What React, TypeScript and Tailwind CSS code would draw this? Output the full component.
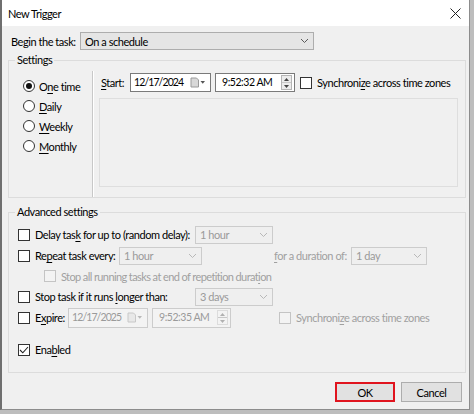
import React from "react";

const FONT = { fontFamily: 'Lato, "Noto Sans", "Liberation Sans", sans-serif' };

function Chevron({ disabled }: { disabled?: boolean }) {
  return (
    <svg width="9" height="6" viewBox="0 0 9 6" className="shrink-0">
      <path d="M1 1 L4.5 4.5 L8 1" fill="none" stroke={disabled ? "#b8b8b8" : "#5a5a5a"} strokeWidth="1" />
    </svg>
  );
}

function Combo({ w, text, disabled, h = 18 }: { w: number; text: string; disabled?: boolean; h?: number }) {
  return (
    <div
      className={
        "flex items-center justify-between pl-[4px] pr-[4px] border shrink-0 " +
        (disabled ? "border-[#cccccc] bg-[#efefef] text-[#9a9a9a]" : "border-[#adadad] bg-[#e5e5e5] text-black")
      }
      style={{ width: w, height: h }}
    >
      <span className="leading-none whitespace-nowrap">{text}</span>
      <Chevron disabled={disabled} />
    </div>
  );
}

function CalIcon({ disabled }: { disabled?: boolean }) {
  const c = disabled ? "#c8c8c8" : "#9a9a9a";
  return (
    <svg width="16" height="11" viewBox="0 0 16 11" className="shrink-0">
      <path d="M1 1 H6.5 L8.5 3 V10 H1 Z" fill={disabled ? "#e8e8e8" : "#d8d8d8"} stroke={c} strokeWidth="1" />
      <path d="M10.5 4 H15 L12.75 6.8 Z" fill={disabled ? "#b8b8b8" : "#555"} />
    </svg>
  );
}

function DateBox({ w, text, disabled, h }: { w: number; text: string; disabled?: boolean; h: number }) {
  return (
    <div
      className={
        "flex items-center justify-between pl-[3px] pr-[4px] border shrink-0 " +
        (disabled ? "border-[#cccccc] bg-[#f3f3f3] text-[#9a9a9a]" : "border-[#7a7a7a] bg-white text-black")
      }
      style={{ width: w, height: h }}
    >
      <span className="leading-none whitespace-nowrap text-[10.5px] tracking-[-0.9px]">{text}</span>
      <CalIcon disabled={disabled} />
    </div>
  );
}

function Spin({ disabled }: { disabled?: boolean }) {
  const c = disabled ? "#b0b0b0" : "#444";
  return (
    <div className={"flex flex-col w-[11px] h-[15px] border shrink-0 " + (disabled ? "border-[#dcdcdc]" : "border-[#b5b5b5] bg-[#ececec]")}>
      <div className="flex-1 flex items-center justify-center border-b border-[#c8c8c8]">
        <svg width="5" height="3" viewBox="0 0 5 3"><path d="M0 3 L2.5 0 L5 3 Z" fill={c} /></svg>
      </div>
      <div className="flex-1 flex items-center justify-center">
        <svg width="5" height="3" viewBox="0 0 5 3"><path d="M0 0 L2.5 3 L5 0 Z" fill={c} /></svg>
      </div>
    </div>
  );
}

function TimeBox({ w, text, disabled, h }: { w: number; text: string; disabled?: boolean; h: number }) {
  return (
    <div
      className={
        "flex items-center justify-between pl-[6px] pr-[2px] border shrink-0 " +
        (disabled ? "border-[#cccccc] bg-[#f3f3f3] text-[#9a9a9a]" : "border-[#7a7a7a] bg-white text-black")
      }
      style={{ width: w, height: h }}
    >
      <span className="leading-none whitespace-nowrap text-[10.5px] tracking-[-0.45px]">{text}</span>
      <Spin disabled={disabled} />
    </div>
  );
}

function Check({ checked, disabled }: { checked?: boolean; disabled?: boolean }) {
  return (
    <div
      className={
        "w-[12px] h-[12px] border shrink-0 flex items-center justify-center " +
        (disabled ? "border-[#c4c4c4] bg-[#f3f3f3]" : "border-[#333333] bg-white")
      }
    >
      {checked && (
        <svg width="10" height="8" viewBox="0 0 10 8">
          <path d="M1 4 L3.8 6.8 L9 1" fill="none" stroke="#222" strokeWidth="1.1" />
        </svg>
      )}
    </div>
  );
}

function Radio({ checked }: { checked?: boolean }) {
  return (
    <div className="w-[12px] h-[12px] rounded-full border border-[#333333] bg-white flex items-center justify-center shrink-0">
      {checked && <div className="w-[6px] h-[6px] rounded-full bg-[#111]" />}
    </div>
  );
}

export default function App() {
  return (
    <div className="w-[474px] h-[414px] bg-[#bdbdbd] text-[11px] tracking-[-0.45px] text-black whitespace-nowrap" style={FONT}>
      <div className="w-[470px] h-[410px] bg-[#f0f0f0] border-l-2 border-l-[#6f6f6f] border-r border-r-[#8c8c8c] border-b border-b-[#8c8c8c] flex flex-col">
        {/* Title bar */}
        <div className="h-[26px] bg-white flex items-center justify-between pl-[6px] pr-[8px] shrink-0">
          <span className="leading-none">New Trigger</span>
          <svg width="11" height="11" viewBox="0 0 11 11">
            <path d="M0.5 0.5 L10.5 10.5 M10.5 0.5 L0.5 10.5" stroke="#222" strokeWidth="1" />
          </svg>
        </div>

        {/* Begin the task */}
        <div className="flex items-center mt-[6px] h-[18px] pl-[9px]">
          <span className="w-[69px] shrink-0 leading-none">Begin the task:</span>
          <Combo w={234} text="On a schedule" />
        </div>

        {/* Settings */}
        <fieldset className="mt-[2px] ml-[6px] w-[458px] border border-[#dcdcdc] p-0 m-0">
          <legend className="ml-[6px] px-[2px] leading-[16px]">Settings</legend>
          <div className="flex h-[129px]">
            <div className="w-[83px] shrink-0 pt-[8px] pl-[14px] flex flex-col">
              {[
                { pre: "O", u: "n", post: "e time", checked: true },
                { pre: "", u: "D", post: "aily" },
                { pre: "", u: "W", post: "eekly" },
                { pre: "", u: "M", post: "onthly" },
              ].map((r, i) => (
                <div key={i} className="h-[20px] flex items-center gap-[4px]">
                  <Radio checked={r.checked} />
                  <span className="leading-none">
                    {r.pre}
                    <u className="underline-offset-2">{r.u}</u>
                    {r.post}
                  </span>
                </div>
              ))}
            </div>
            <div className="mt-[3px] w-[2px] shrink-0 border-l border-l-[#c8c8c8] border-r border-r-white" />
            <div className="flex-1 flex flex-col pl-[5px] pr-[7px]">
              <div className="mt-[5px] h-[19px] flex items-center">
                <span className="ml-[2px] w-[29px] shrink-0 leading-none">
                  <u className="underline-offset-2">S</u>tart:
                </span>
                <DateBox w={81} h={19} text="12/17/2024" />
                <div className="ml-[4px] shrink-0">
                  <TimeBox w={80} h={19} text="9:52:32 AM" />
                </div>
                <div className="ml-[5px] flex items-center gap-[5px] shrink-0">
                  <Check />
                  <span className="leading-none">
                    Synchroni<u className="underline-offset-2">z</u>e across time zones
                  </span>
                </div>
              </div>
              <div className="mt-[6px] h-[89px] border border-[#dedede] bg-[#f0f0f0]" />
            </div>
          </div>
        </fieldset>

        {/* Advanced settings */}
        <fieldset className="mt-[6px] ml-[6px] w-[458px] border border-[#dcdcdc] p-0 m-0">
          <legend className="ml-[6px] px-[2px] leading-[16px]">Advanced settings</legend>
          <div className="pt-[4px] pb-[12px] pl-[9px] flex flex-col">
            <div className="h-[21px] flex items-center">
              <Check />
              <span className="ml-[5px] w-[160px] shrink-0 leading-none">
                Delay tas<u className="underline-offset-2">k</u> for up to (random delay):
              </span>
              <Combo w={78} text="1 hour" disabled />
            </div>
            <div className="h-[21px] flex items-center">
              <Check />
              <span className="ml-[5px] w-[84px] shrink-0 leading-none">
                Re<u className="underline-offset-2">p</u>eat task every:
              </span>
              <Combo w={83} text="1 hour" disabled />
              <span className="ml-[72px] w-[77px] shrink-0 leading-none text-[#a0a0a0]">
                <u className="underline-offset-2">f</u>or a duration of:
              </span>
              <Combo w={76} text="1 day" disabled />
            </div>
            <div className="h-[20px] flex items-center pl-[26px]">
              <Check disabled />
              <span className="ml-[5px] leading-none text-[#a0a0a0] tracking-[-0.6px]">
                Stop all running tasks at end of repetition durat<u className="underline-offset-2">i</u>on
              </span>
            </div>
            <div className="h-[21px] flex items-center">
              <Check />
              <span className="ml-[5px] w-[160px] shrink-0 leading-none">
                Stop task if it runs <u className="underline-offset-2">l</u>onger than:
              </span>
              <Combo w={78} text="3 days" disabled />
            </div>
            <div className="h-[21px] flex items-center">
              <Check />
              <span className="ml-[5px] w-[33px] shrink-0 leading-none">
                E<u className="underline-offset-2">x</u>pire:
              </span>
              <DateBox w={80} h={20} text="12/17/2025" disabled />
              <div className="ml-[4px] shrink-0">
                <TimeBox w={79} h={20} text="9:52:35 AM" disabled />
              </div>
              <div className="ml-[48px] flex items-center gap-[5px] shrink-0">
                <Check disabled />
                <span className="leading-none text-[#a0a0a0]">
                  Synchroni<u className="underline-offset-2">z</u>e across time zones
                </span>
              </div>
            </div>
            <div className="mt-[11px] h-[21px] flex items-center">
              <Check checked />
              <span className="ml-[5px] leading-none">
                Ena<u className="underline-offset-2">b</u>led
              </span>
            </div>
          </div>
        </fieldset>

        {/* Buttons */}
        <div className="mt-[9px] flex justify-end pr-[7px] gap-[6px]">
          <div className="w-[60px] h-[20px] border-2 border-[#e0141e] bg-[#e1e1e1] flex items-center justify-center">
            <span className="leading-none">OK</span>
          </div>
          <div className="w-[61px] h-[20px] border border-[#adadad] bg-[#e1e1e1] flex items-center justify-center">
            <span className="leading-none">Cancel</span>
          </div>
        </div>
      </div>
    </div>
  );
}
